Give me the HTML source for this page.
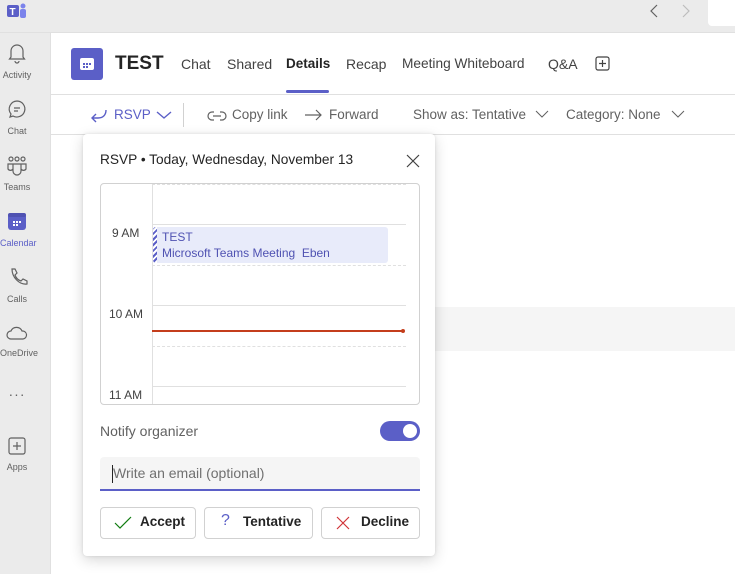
<!DOCTYPE html>
<html><head><style>
*{box-sizing:border-box;margin:0;padding:0}
body{width:735px;height:574px;overflow:hidden;font-family:"Segoe UI","Liberation Sans",sans-serif;background:#fff;position:relative;color:#242424}
.a{position:absolute}
.top{left:0;top:0;width:735px;height:33px;background:#ebebeb;border-bottom:1px solid #e0e0e0}
.rail{left:0;top:33px;width:51px;height:541px;background:#ebebeb;border-right:1px solid #e0e0e0}
.ri{position:absolute;left:0;width:34px;text-align:center;font-size:9px;color:#616161}
.tab{position:absolute;top:56px;font-size:14px;color:#424242}
.tb{position:absolute;top:107px;font-size:13.5px;color:#616161}
</style></head><body>
<div class="a top"></div>
<svg class="a" style="left:6px;top:2px" width="22" height="18"><rect x="1" y="3" width="12" height="12" rx="2" fill="#5b5fc7"/><text x="3.5" y="13" font-size="10" font-weight="bold" fill="#fff" font-family="Liberation Sans">T</text><circle cx="17" cy="4" r="2.5" fill="#7b83eb"/><rect x="14" y="7" width="6" height="9" rx="2" fill="#7b83eb"/></svg>
<svg class="a" style="left:649px;top:4px" width="10" height="14" fill="none" stroke="#616161" stroke-width="1.2"><path d="M8 1L2 7l6 6"/></svg>
<svg class="a" style="left:681px;top:4px" width="10" height="14" fill="none" stroke="#bdbdbd" stroke-width="1.2"><path d="M2 1l6 6-6 6"/></svg>
<div class="a" style="left:708px;top:-4px;width:40px;height:30px;background:#fff;border-radius:4px"></div>
<div class="a rail"></div>
<svg class="a" style="left:7px;top:42px" width="20" height="22" fill="none" stroke="#616161" stroke-width="1.2"><path d="M4 15V9a6 6 0 0 1 12 0v6l1.5 2h-15z"/><path d="M8 19a2 2 0 0 0 4 0"/></svg>
<div class="ri" style="top:70px">Activity</div>
<svg class="a" style="left:7px;top:99px" width="20" height="22" fill="none" stroke="#616161" stroke-width="1.2"><path d="M10 2a8 8 0 1 1-4 15l-3 1 1-3A8 8 0 0 1 10 2z"/><path d="M7 9h6M7 12h4"/></svg>
<div class="ri" style="top:126px">Chat</div>
<svg class="a" style="left:6px;top:156px" width="22" height="20" fill="none" stroke="#616161" stroke-width="1.2"><circle cx="5" cy="3" r="2"/><circle cx="11" cy="3" r="2"/><circle cx="17" cy="3" r="2"/><path d="M2 8h5v5a3 3 0 0 1-5 0zM15 8h5v5a3 3 0 0 1-5 0zM7 8h8v7a4 4 0 0 1-8 0z"/></svg>
<div class="ri" style="top:182px">Teams</div>
<svg class="a" style="left:8px;top:212px" width="20" height="20"><rect x="0" y="1" width="18" height="17" rx="3" fill="#5b5fc7"/><rect x="0" y="1" width="18" height="4" rx="2" fill="#4f52b2"/><g fill="#fff"><rect x="5" y="9" width="2" height="2"/><rect x="8" y="9" width="2" height="2"/><rect x="11" y="9" width="2" height="2"/><rect x="5" y="12" width="2" height="2"/><rect x="8" y="12" width="2" height="2"/></g></svg>
<div class="ri" style="top:238px;color:#5b5fc7">Calendar</div>
<svg class="a" style="left:8px;top:267px" width="20" height="22" fill="none" stroke="#616161" stroke-width="1.2"><path d="M4 2l3 0 2 4-2 2c1 3 3 5 6 6l2-2 4 2v3c-8 1-15-7-15-15z"/></svg>
<div class="ri" style="top:294px">Calls</div>
<svg class="a" style="left:6px;top:325px" width="22" height="16" fill="none" stroke="#616161" stroke-width="1.2"><path d="M5 14a4 4 0 0 1 0-8 6 6 0 0 1 11 0 4 4 0 0 1 1 8z"/></svg>
<div class="ri" style="top:348px">OneDrive</div>
<div class="ri" style="top:386px;font-size:14px;letter-spacing:1px">···</div>
<svg class="a" style="left:8px;top:437px" width="20" height="20" fill="none" stroke="#616161" stroke-width="1.2"><rect x="1" y="1" width="16" height="16" rx="2"/><path d="M9 5v8M5 9h8"/></svg>
<div class="ri" style="top:462px">Apps</div>

<svg class="a" style="left:71px;top:48px" width="32" height="32"><rect width="32" height="32" rx="3" fill="#5b5fc7"/><rect x="9" y="10" width="14" height="12" rx="2" fill="#fff"/><g fill="#5b5fc7"><rect x="12" y="15" width="2" height="2"/><rect x="15" y="15" width="2" height="2"/><rect x="18" y="15" width="2" height="2"/><rect x="12" y="18" width="2" height="2"/><rect x="15" y="18" width="2" height="2"/></g></svg>
<div class="a" style="left:115px;top:53px;font-size:19px;font-weight:bold;color:#242424">TEST</div>
<div class="tab" style="left:181px">Chat</div>
<div class="tab" style="left:227px">Shared</div>
<div class="tab" style="left:286px;font-weight:bold;color:#242424;font-size:13.5px">Details</div>
<div class="a" style="left:286px;top:90px;width:43px;height:3px;background:#5b5fc7;border-radius:2px"></div>
<div class="tab" style="left:346px">Recap</div>
<div class="tab" style="left:402px;font-size:13.7px">Meeting Whiteboard</div>
<div class="tab" style="left:548px">Q&amp;A</div>
<svg class="a" style="left:595px;top:56px" width="16" height="16" fill="none" stroke="#424242" stroke-width="1.2"><rect x="1" y="1" width="13" height="13" rx="2"/><path d="M7.5 4v7M4 7.5h7"/></svg>
<div class="a" style="left:51px;top:94px;width:684px;height:1px;background:#e0e0e0"></div>
<svg class="a" style="left:90px;top:107px" width="18" height="16" fill="none" stroke="#5b5fc7" stroke-width="1.4"><path d="M16 3c0 5-3 8-8 8H2M6 7l-4 4 4 4"/></svg>
<div class="tb" style="left:114px;color:#5b5fc7">RSVP</div>
<svg class="a" style="left:156px;top:110px" width="16" height="10" fill="none" stroke="#5b5fc7" stroke-width="1.4"><path d="M1 2l7 6 7-6"/></svg>
<div class="a" style="left:183px;top:103px;width:1px;height:24px;background:#d1d1d1"></div>
<svg class="a" style="left:207px;top:110px" width="20" height="12" fill="none" stroke="#616161" stroke-width="1.2"><path d="M7 2H5a4 4 0 0 0 0 8h2M13 2h2a4 4 0 0 1 0 8h-2M6 6h8"/></svg>
<div class="tb" style="left:232px">Copy link</div>
<svg class="a" style="left:304px;top:109px" width="20" height="12" fill="none" stroke="#616161" stroke-width="1.2"><path d="M1 6h16M12 1l5 5-5 5"/></svg>
<div class="tb" style="left:329px">Forward</div>
<div class="tb" style="left:413px">Show as: Tentative</div>
<svg class="a" style="left:535px;top:110px" width="14" height="9" fill="none" stroke="#616161"><path d="M1 1l6 6 6-6"/></svg>
<div class="tb" style="left:566px">Category: None</div>
<svg class="a" style="left:671px;top:110px" width="14" height="9" fill="none" stroke="#616161"><path d="M1 1l6 6 6-6"/></svg>
<div class="a" style="left:51px;top:134px;width:684px;height:1px;background:#e0e0e0"></div>
<div class="a" style="left:420px;top:152px;font-size:14px;color:#c4701a">M</div>
<div class="a" style="left:420px;top:307px;width:315px;height:44px;background:#f5f5f5"></div>

<div class="a" style="left:83px;top:134px;width:352px;height:422px;background:#fff;border-radius:4px;box-shadow:0 4px 14px rgba(0,0,0,.16),0 0 3px rgba(0,0,0,.1)"></div>
<div class="a" style="left:100px;top:152px;font-size:13.7px;color:#242424">RSVP • Today, Wednesday, November 13</div>
<svg class="a" style="left:406px;top:154px" width="14" height="14" stroke="#424242" stroke-width="1.2"><path d="M1 1l12 12M13 1L1 13"/></svg>
<div class="a" style="left:100px;top:183px;width:320px;height:222px;border:1px solid #d1d1d1;border-radius:4px;overflow:hidden">
 <div class="a" style="left:51px;top:0;width:1px;height:222px;background:#e0e0e0"></div>
 <div class="a" style="left:51px;top:0;width:254px;border-top:1px dashed #e0e0e0"></div>
 <div class="a" style="left:51px;top:40px;width:254px;height:1px;background:#e0e0e0"></div>
 <div class="a" style="left:51px;top:81px;width:254px;border-top:1px dashed #e0e0e0"></div>
 <div class="a" style="left:51px;top:121px;width:254px;height:1px;background:#e0e0e0"></div>
 <div class="a" style="left:51px;top:162px;width:254px;border-top:1px dashed #e0e0e0"></div>
 <div class="a" style="left:51px;top:202px;width:254px;height:1px;background:#e0e0e0"></div>
 <div class="a" style="left:11px;top:42px;font-size:12px;color:#424242">9 AM</div>
 <div class="a" style="left:8px;top:123px;font-size:12px;color:#424242">10 AM</div>
 <div class="a" style="left:8px;top:204px;font-size:12px;color:#424242">11 AM</div>
 <div class="a" style="left:52px;top:43px;width:235px;height:36px;background:#e8ebfa;border-radius:3px;overflow:hidden">
  <div class="a" style="left:0;top:0;width:4px;height:36px;background:repeating-linear-gradient(135deg,#5b5fc7 0 2px,#fff 2px 4px)"></div>
  <div class="a" style="left:9px;top:2px;font-size:12px;color:#4f52b2;line-height:16px">TEST<br>Microsoft Teams Meeting&nbsp; Eben</div>
 </div>
 <div class="a" style="left:51px;top:146px;width:252px;height:2px;background:#c43e1c"></div>
 <div class="a" style="left:300px;top:145px;width:4px;height:4px;border-radius:2px;background:#c43e1c"></div>
</div>
<div class="a" style="left:100px;top:423px;font-size:14px;color:#616161">Notify organizer</div>
<div class="a" style="left:380px;top:421px;width:40px;height:20px;border-radius:10px;background:#5b5fc7"><div class="a" style="left:23px;top:3px;width:14px;height:14px;border-radius:7px;background:#fff"></div></div>
<div class="a" style="left:100px;top:457px;width:320px;height:34px;background:#f5f5f5;border-radius:4px 4px 0 0;border-bottom:2px solid #5b5fc7"></div>
<div class="a" style="left:112px;top:465px;width:1px;height:18px;background:#242424"></div>
<div class="a" style="left:113px;top:465px;font-size:14px;color:#707070">Write an email (optional)</div>
<div class="a" style="left:100px;top:507px;width:96px;height:32px;border:1px solid #d1d1d1;border-radius:4px"></div>
<svg class="a" style="left:114px;top:516px" width="18" height="14" fill="none" stroke="#107c10" stroke-width="1.2"><path d="M1 7l5 5L17 1"/></svg>
<div class="a" style="left:140px;top:514px;font-size:13.5px;font-weight:bold;color:#242424">Accept</div>
<div class="a" style="left:204px;top:507px;width:109px;height:32px;border:1px solid #d1d1d1;border-radius:4px"></div>
<div class="a" style="left:221px;top:512px;font-size:16px;color:#5b5fc7">?</div>
<div class="a" style="left:243px;top:514px;font-size:13.5px;font-weight:bold;color:#242424">Tentative</div>
<div class="a" style="left:321px;top:507px;width:99px;height:32px;border:1px solid #d1d1d1;border-radius:4px"></div>
<svg class="a" style="left:336px;top:516px" width="14" height="14" stroke="#d13438" stroke-width="1.2"><path d="M1 1l12 12M13 1L1 13"/></svg>
<div class="a" style="left:361px;top:514px;font-size:13.5px;font-weight:bold;color:#242424">Decline</div>
</body></html>
